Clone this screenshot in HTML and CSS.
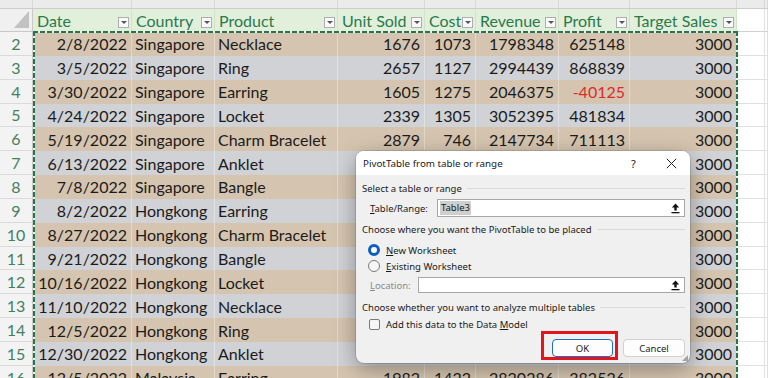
FILE: index.html
```html
<!DOCTYPE html>
<html>
<head>
<meta charset="utf-8">
<link rel="stylesheet" href="styles.css">
</head>
<body>
<div class="sheet">
  <div class="row strip"><div></div><div></div><div></div><div></div><div></div><div></div><div></div><div></div><div></div><div></div><div></div></div>
  <div class="row hdr">
    <div class="corner"><span class="tri"></span></div>
    <div class="h">Date<span class="dd"></span></div>
    <div class="h">Country<span class="dd"></span></div>
    <div class="h">Product<span class="dd"></span></div>
    <div class="h">Unit Sold<span class="dd"></span></div>
    <div class="h">Cost<span class="dd"></span></div>
    <div class="h">Revenue<span class="dd"></span></div>
    <div class="h">Profit<span class="dd"></span></div>
    <div class="h">Target Sales<span class="dd"></span></div>
    <div class="e"></div><div class="e"></div>
  </div>

  <div class="row dr tan"><div class="rn">2</div><div class="c n">2/8/2022</div><div class="c">Singapore</div><div class="c">Necklace</div><div class="c n">1676</div><div class="c n">1073</div><div class="c n">1798348</div><div class="c n">625148</div><div class="c n">3000</div><div class="e"></div><div class="e"></div></div>
  <div class="row dr gry"><div class="rn">3</div><div class="c n">3/5/2022</div><div class="c">Singapore</div><div class="c">Ring</div><div class="c n">2657</div><div class="c n">1127</div><div class="c n">2994439</div><div class="c n">868839</div><div class="c n">3000</div><div class="e"></div><div class="e"></div></div>
  <div class="row dr tan"><div class="rn">4</div><div class="c n">3/30/2022</div><div class="c">Singapore</div><div class="c">Earring</div><div class="c n">1605</div><div class="c n">1275</div><div class="c n">2046375</div><div class="c n neg">-40125</div><div class="c n">3000</div><div class="e"></div><div class="e"></div></div>
  <div class="row dr gry"><div class="rn">5</div><div class="c n">4/24/2022</div><div class="c">Singapore</div><div class="c">Locket</div><div class="c n">2339</div><div class="c n">1305</div><div class="c n">3052395</div><div class="c n">481834</div><div class="c n">3000</div><div class="e"></div><div class="e"></div></div>
  <div class="row dr tan"><div class="rn">6</div><div class="c n">5/19/2022</div><div class="c">Singapore</div><div class="c">Charm Bracelet</div><div class="c n">2879</div><div class="c n">746</div><div class="c n">2147734</div><div class="c n">711113</div><div class="c n">3000</div><div class="e"></div><div class="e"></div></div>
  <div class="row dr gry"><div class="rn">7</div><div class="c n">6/13/2022</div><div class="c">Singapore</div><div class="c">Anklet</div><div class="c n">2120</div><div class="c n">980</div><div class="c n">2077600</div><div class="c n">512300</div><div class="c n">3000</div><div class="e"></div><div class="e"></div></div>
  <div class="row dr tan"><div class="rn">8</div><div class="c n">7/8/2022</div><div class="c">Singapore</div><div class="c">Bangle</div><div class="c n">1840</div><div class="c n">1210</div><div class="c n">2226400</div><div class="c n">402180</div><div class="c n">3000</div><div class="e"></div><div class="e"></div></div>
  <div class="row dr gry"><div class="rn">9</div><div class="c n">8/2/2022</div><div class="c">Hongkong</div><div class="c">Earring</div><div class="c n">2410</div><div class="c n">1130</div><div class="c n">2723300</div><div class="c n">610420</div><div class="c n">3000</div><div class="e"></div><div class="e"></div></div>
  <div class="row dr tan"><div class="rn">10</div><div class="c n">8/27/2022</div><div class="c">Hongkong</div><div class="c">Charm Bracelet</div><div class="c n">1990</div><div class="c n">870</div><div class="c n">1731300</div><div class="c n">380210</div><div class="c n">3000</div><div class="e"></div><div class="e"></div></div>
  <div class="row dr gry"><div class="rn">11</div><div class="c n">9/21/2022</div><div class="c">Hongkong</div><div class="c">Bangle</div><div class="c n">2560</div><div class="c n">1045</div><div class="c n">2675200</div><div class="c n">590120</div><div class="c n">3000</div><div class="e"></div><div class="e"></div></div>
  <div class="row dr tan"><div class="rn">12</div><div class="c n">10/16/2022</div><div class="c">Hongkong</div><div class="c">Locket</div><div class="c n">1730</div><div class="c n">1390</div><div class="c n">2404700</div><div class="c n">320410</div><div class="c n">3000</div><div class="e"></div><div class="e"></div></div>
  <div class="row dr gry"><div class="rn">13</div><div class="c n">11/10/2022</div><div class="c">Hongkong</div><div class="c">Necklace</div><div class="c n">2245</div><div class="c n">1180</div><div class="c n">2649100</div><div class="c n">540330</div><div class="c n">3000</div><div class="e"></div><div class="e"></div></div>
  <div class="row dr tan"><div class="rn">14</div><div class="c n">12/5/2022</div><div class="c">Hongkong</div><div class="c">Ring</div><div class="c n">1655</div><div class="c n">1240</div><div class="c n">2052200</div><div class="c n">298760</div><div class="c n">3000</div><div class="e"></div><div class="e"></div></div>
  <div class="row dr gry"><div class="rn">15</div><div class="c n">12/30/2022</div><div class="c">Hongkong</div><div class="c">Anklet</div><div class="c n">2020</div><div class="c n">905</div><div class="c n">1828100</div><div class="c n">410560</div><div class="c n">3000</div><div class="e"></div><div class="e"></div></div>
  <div class="row dr tan"><div class="rn">16</div><div class="c n">12/5/2022</div><div class="c">Malaysia</div><div class="c">Earring</div><div class="c n">1982</div><div class="c n">1422</div><div class="c n">2820286</div><div class="c n">382526</div><div class="c n">3000</div><div class="e"></div><div class="e"></div></div>
</div>

<div class="marquee"><span class="mt"></span><span class="ml"></span><span class="mr"></span></div>

<div class="dlg">
  <div class="dlg-title">
    <span class="t">PivotTable from table or range</span>
    <span class="q">?</span>
    <svg class="x" width="11" height="11" viewBox="0 0 11 11"><path d="M0.8 0.8 L10.2 10.2 M10.2 0.8 L0.8 10.2" stroke="#222" stroke-width="1" fill="none"/></svg>
  </div>
  <div class="dlg-body">
    <div class="grp g1"><span>Select a table or range</span></div>
    <div class="field f1">
      <label class="lbl"><u>T</u>able/Range:</label>
      <div class="inp"><span class="sel">Table3</span>
        <span class="up"><svg width="11" height="12" viewBox="0 0 11 12"><path d="M5.5 1.5 L1.8 5.4 H4.3 V8.5 H6.7 V5.4 H9.2 Z" fill="#111"/><rect x="1.5" y="10" width="8" height="1.3" fill="#111"/></svg></span>
      </div>
    </div>
    <div class="grp g2"><span>Choose where you want the PivotTable to be placed</span></div>
    <div class="opt o1"><span class="radio on"></span><span><u>N</u>ew Worksheet</span></div>
    <div class="opt o2"><span class="radio"></span><span><u>E</u>xisting Worksheet</span></div>
    <div class="field f2">
      <label class="lbl dis"><u>L</u>ocation:</label>
      <div class="inp">
        <span class="up"><svg width="11" height="12" viewBox="0 0 11 12"><path d="M5.5 1.5 L1.8 5.4 H4.3 V8.5 H6.7 V5.4 H9.2 Z" fill="#111"/><rect x="1.5" y="10" width="8" height="1.3" fill="#111"/></svg></span>
      </div>
    </div>
    <div class="grp g3"><span>Choose whether you want to analyze multiple tables</span></div>
    <div class="opt o3"><span class="check"></span><span>Add this data to the Data <u>M</u>odel</span></div>
    <div class="btns"><span class="btn ok">OK</span><span class="btn">Cancel</span></div>
  </div>
  <div class="hl"></div>
  <div class="grip"></div>
</div>
</body>
</html>
```

FILE: styles.css
```css
* { box-sizing: border-box; margin: 0; padding: 0; }
body {
  margin: 0;
  width: 768px;
  height: 378px;
  overflow: hidden;
  position: relative;
  background: #fff;
  font-family: Lato, "Open Sans", sans-serif;
}
.sheet { display: flex; flex-direction: column; font-size: 16px; color: #1b1b1b; }
.row {
  display: grid;
  grid-template-columns: 33px 99px 83px 123px 87px 51px 83px 71px 107px 28px 1fr;
}
.strip { height: 9px; background: #ebebeb; border-bottom: 1px solid #cdcdcd; }
.strip > div { border-right: 1px solid #d8d8d8; }
.hdr { height: 23px; }
.corner { background: #f0f0f0; border-right: 1px solid #c9c9c9; position: relative; border-bottom: 1px solid #c9c9c9; }
.tri {
  position: absolute; right: 3px; bottom: 3px;
  width: 0; height: 0;
  border-left: 15px solid transparent;
  border-bottom: 17px solid #c2c2c2;
}
.h {
  background: #e1efdb;
  color: #2a7a4c;
  display: flex;
  align-items: center;
  padding-left: 4px;
  border-right: 1px solid #d2e3cb;
  white-space: nowrap;
}
.dd {
  margin-left: auto;
  margin-right: 2px;
  width: 11px; height: 11px;
  border: 1px solid #aeaeae;
  background: #fafafa;
  display: flex; align-items: center; justify-content: center;
  margin-top: 3px;
  flex: none;
}
.dd::after {
  content: "";
  border-left: 3px solid transparent;
  border-right: 3px solid transparent;
  border-top: 3px solid #555;
  margin-top: 1px;
}
.e { border-right: 1px solid #e0e0e0; border-bottom: 1px solid #e0e0e0; background: #fff; }
.hdr .e { border-bottom: 1px solid #d0d0d0; }
.dr { height: 23.85px; }
.rn {
  background: #f3f3f3;
  color: #44805f;
  display: flex; align-items: center; justify-content: center;
  border-right: 1px solid #c9c9c9;
  border-bottom: 1px solid #dadada;
}
.c {
  display: flex; align-items: center;
  padding: 0 4px 0 3px;
  white-space: nowrap;
  overflow: hidden;
  border-right: 1px solid rgba(255,255,255,0.35);
}
.c.n { justify-content: flex-end; }
.tan .c { background: #d5c5b0; }
.gry .c { background: #d0d2d6; }
.neg { color: #dd2a2a; }

/* copy marquee overlay */
.marquee { position: absolute; left: 33px; top: 31px; width: 705px; height: 347px; pointer-events: none; }
.marquee span { position: absolute; }
.mt { left: 0; top: 0; width: 100%; height: 2px; background: repeating-linear-gradient(90deg, #25744a 0 5px, #e9f2ec 5px 7px); }
.ml { left: 0; top: 0; width: 2px; height: 100%; background: repeating-linear-gradient(180deg, #25744a 0 5px, #e9f2ec 5px 7px); }
.mr { right: 0; top: 0; width: 2px; height: 100%; background: repeating-linear-gradient(180deg, #25744a 0 5px, #e9f2ec 5px 7px); }

/* dialog */
.dlg {
  position: absolute;
  left: 356px; top: 151px;
  width: 334px; height: 212px;
  border-radius: 8px;
  background: #f0f0f0;
  box-shadow: 0 6px 22px rgba(0,0,0,0.35), 0 0 0 1px rgba(0,0,0,0.12);
  font-family: "Noto Sans", "Open Sans", sans-serif;
  font-size: 9.5px;
  color: #1a1a1a;
  display: flex; flex-direction: column;
}
.dlg-title {
  height: 24px;
  background: #fff;
  border-radius: 8px 8px 0 0;
  display: flex; align-items: center;
  padding-left: 7px;
  font-size: 9.8px;
}
.dlg-title .t { flex: 1; }
.dlg-title .q { width: 8px; margin-right: 27px; font-size: 11px; }
.dlg-title .x { margin-right: 13px; }
.dlg-body { flex: 1; display: flex; flex-direction: column; padding: 6px 5px 0 6px; }
.grp { display: flex; align-items: center; height: 14px; gap: 5px; }
.grp::after { content: ""; flex: 1; height: 1px; background: #d9d9d9; }
.g2 { margin-top: 5px; }
.g3 { margin-top: 7px; }
.field { display: flex; align-items: center; padding-left: 8px; }
.f1 { margin-top: 4px; height: 18px; }
.f1 .lbl { width: 67px; }
.f2 { margin-top: 3px; height: 16px; }
.f2 .lbl { width: 48px; }
.lbl.dis { color: #8a8a8a; }
.inp {
  flex: 1; height: 100%;
  background: #fff;
  border: 1px solid #a8a8a8;
  display: flex; align-items: center;
  padding-left: 2px;
}
.sel { background: #cfcfcf; padding: 0 1px; line-height: 14px; }
.up {
  margin-left: auto;
  width: 16px; height: 14px;
  display: flex; align-items: center; justify-content: center;
  background: #fff;
  margin-right: 1px;
}
.opt { display: flex; align-items: center; gap: 6px; height: 16px; padding-left: 6px; }
.o1 { margin-top: 6px; }
.o3 { margin-top: 2px; padding-left: 7px; gap: 6px; }
.radio {
  width: 12px; height: 12px; border-radius: 50%;
  border: 1px solid #7a7a7a;
  background: #f6f6f6;
}
.radio.on { border: 3.5px solid #0a5fbf; background: #fff; }
.check { width: 11px; height: 11px; border: 1px solid #7a7a7a; border-radius: 2px; background: #f6f6f6; }
.btns { display: flex; justify-content: flex-end; gap: 10px; margin-top: 7px; }
.btn {
  width: 62px; height: 18px;
  display: flex; align-items: center; justify-content: center;
  background: #fdfdfd;
  border: 1px solid #d0d0d0;
  border-radius: 4px;
}
.btn.ok { width: 61px; border: 1.5px solid #1e6fc8; }
.hl {
  position: absolute;
  left: 185px; top: 180px;
  width: 77px; height: 29px;
  border: 3px solid #e3141b;
}
.grip {
  position: absolute; right: 2px; bottom: 2px;
  width: 6px; height: 6px;
  background: radial-gradient(circle, #a0a0a0 0.7px, transparent 1px) 0 0 / 2px 2px;
  clip-path: polygon(100% 0, 100% 100%, 0 100%);
}
```
